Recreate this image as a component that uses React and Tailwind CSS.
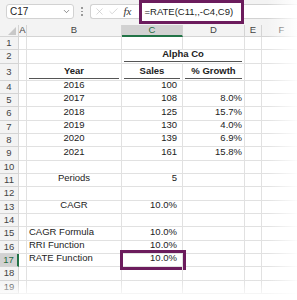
import { ChevronDown, X, Check } from 'lucide-react'

const cols = [
  { key: 'A', w: 'w-[8px]' },
  { key: 'B', w: 'w-[95px]' },
  { key: 'C', w: 'w-[61px]' },
  { key: 'D', w: 'w-[62px]' },
  { key: 'E', w: 'w-[17px]' },
  { key: 'F', w: 'w-[40px]' },
]

const rows = [
  { n: 1, h: 'h-[13px]' },
  { n: 2, h: 'h-[14px]', c: 'Alpha Co' },
  { n: 3, h: 'h-[17px]', b: 'Year', c: 'Sales', d: '% Growth', head: true },
  { n: 4, h: 'h-[13px]', b: '2016', c: '100' },
  { n: 5, h: 'h-[13px]', b: '2017', c: '108', d: '8.0%' },
  { n: 6, h: 'h-[14px]', b: '2018', c: '125', d: '15.7%' },
  { n: 7, h: 'h-[13px]', b: '2019', c: '130', d: '4.0%' },
  { n: 8, h: 'h-[13px]', b: '2020', c: '139', d: '6.9%' },
  { n: 9, h: 'h-[14px]', b: '2021', c: '161', d: '15.8%' },
  { n: 10, h: 'h-[13px]' },
  { n: 11, h: 'h-[13px]', b: 'Periods', c: '5' },
  { n: 12, h: 'h-[14px]' },
  { n: 13, h: 'h-[13px]', b: 'CAGR', c: '10.0%' },
  { n: 14, h: 'h-[13px]' },
  { n: 15, h: 'h-[14px]', b: 'CAGR Formula', c: '10.0%', left: true },
  { n: 16, h: 'h-[13px]', b: 'RRI Function', c: '10.0%', left: true },
  { n: 17, h: 'h-[13px]', b: 'RATE Function', c: '10.0%', left: true, sel: true },
  { n: 18, h: 'h-[14px]' },
  { n: 19, h: 'h-[13px]' },
]

function Row({ r }) {
  const line = 'border-r border-b border-[#e1e1e1]'
  return (
    <div className={`flex ${r.h}`}>
      <div
        className={`w-[19px] shrink-0 flex items-center justify-center border-r border-b border-[#d4d4d4] text-[9.5px] ${
          r.sel ? 'bg-[#d2d2d2] text-[#1e6b3e] border-r-2 border-r-[#217346]' : 'bg-[#f3f3f3] text-[#444]'
        }`}
      >
        {r.n}
      </div>
      <div className={`w-[8px] shrink-0 ${line}`} />
      <div
        className={`w-[95px] shrink-0 ${line} flex items-end pb-[1px] whitespace-nowrap ${
          r.left ? 'justify-start pl-[2px]' : 'justify-center'
        } ${r.head ? 'font-bold' : ''}`}
      >
        {r.head ? (
          <div className="mx-[2px] w-full border-b-[1.5px] border-[#555] text-center">{r.b}</div>
        ) : (
          r.b
        )}
      </div>
      {r.n === 2 ? (
        <div className="w-[123px] shrink-0 border-b border-[#e1e1e1] border-r flex items-end pb-[1px] font-bold">
          <div className="mx-[2px] w-full border-b-[1.5px] border-[#555] text-center">{r.c}</div>
        </div>
      ) : (
        <>
          <div
            className={`relative w-[61px] shrink-0 ${line} flex items-end pb-[1px] ${
              r.head ? 'font-bold' : 'justify-end pr-[5px]'
            }`}
          >
            {r.head ? (
              <div className="mx-[2px] w-full border-b-[1.5px] border-[#555] text-center">{r.c}</div>
            ) : (
              r.c
            )}
            {r.sel && (
              <div className="absolute -left-[2px] -top-[4px] w-[66px] h-[20px] border-[3px] border-[#6c1c5d] bg-transparent" />
            )}
          </div>
          <div
            className={`w-[62px] shrink-0 ${line} flex items-end pb-[1px] ${
              r.head ? 'font-bold' : 'justify-end pr-[2px]'
            }`}
          >
            {r.head ? (
              <div className="mx-[2px] w-full border-b-[1.5px] border-[#555] text-center">{r.d}</div>
            ) : (
              r.d
            )}
          </div>
        </>
      )}
      <div className={`w-[17px] shrink-0 ${line}`} />
      <div className={`w-[40px] shrink-0 ${line}`} />
    </div>
  )
}

export default function App() {
  return (
    <div
      className="relative w-[297px] h-[300px] overflow-hidden bg-white text-[#222] text-[9.5px]"
      style={{ fontFamily: '"Liberation Sans", Arial, sans-serif' }}
    >
      {/* formula bar */}
      <div className="flex h-[25px] items-start bg-[#f3f3f3]">
        <div className="mt-[4px] ml-[6px] flex h-[15px] w-[68px] shrink-0 items-center justify-between rounded-[3px] border border-[#d2d2d2] bg-white pl-[3px] pr-[2px] text-[10px] text-[#222]">
          <span>C17</span>
          <ChevronDown size={9} strokeWidth={1.6} className="text-[#444]" />
        </div>
        <div className="mt-[7px] ml-[7px] flex shrink-0 flex-col gap-[2px]">
          <span className="block h-[1.5px] w-[1.5px] bg-[#999]" />
          <span className="block h-[1.5px] w-[1.5px] bg-[#999]" />
          <span className="block h-[1.5px] w-[1.5px] bg-[#999]" />
        </div>
        <div className="mt-[4px] ml-[7px] flex h-[15px] w-[49px] shrink-0 items-center gap-[3px] rounded-l-[3px] border border-r-0 border-[#d2d2d2] bg-white pl-[3px]">
          <X size={11} strokeWidth={1.2} className="text-[#b8b8b8]" />
          <Check size={11} strokeWidth={1.2} className="text-[#b8b8b8]" />
          <span className="ml-[2px] text-[11px] italic text-[#333]" style={{ fontFamily: '"Liberation Serif", serif' }}>
            fx
          </span>
        </div>
        <div className="flex h-[24px] w-[105px] shrink-0 items-center whitespace-nowrap border-[3px] border-[#6c1c5d] bg-white pl-[3px] text-[9.5px] text-[#222]">
          =RATE(C11,,-C4,C9)
        </div>
        <div className="mt-[4px] h-[15px] flex-1 border-y border-[#d2d2d2] bg-white" />
      </div>

      {/* column headers */}
      <div className="flex h-[12px] bg-[#f3f3f3] text-[9.5px] text-[#444]">
        <div className="relative w-[19px] shrink-0 border-r border-b border-[#d4d4d4]">
          <div
            className="absolute right-[2px] bottom-[1px] h-[8px] w-[8px] bg-[#c8c8c8]"
            style={{ clipPath: 'polygon(100% 0, 100% 100%, 0 100%)' }}
          />
        </div>
        {cols.map((c) => (
          <div
            key={c.key}
            className={`${c.w} shrink-0 flex items-center justify-center border-r border-[#d4d4d4] ${
              c.key === 'C' ? 'bg-[#d2d2d2] text-[#1e6b3e] border-b-2 border-b-[#217346]' : 'border-b'
            }`}
          >
            {c.key}
          </div>
        ))}
      </div>

      {rows.map((r) => (
        <Row key={r.n} r={r} />
      ))}

      {/* edge fades */}
      <div className="pointer-events-none absolute right-0 top-0 h-full w-[30px] bg-gradient-to-r from-transparent to-white/90" />
      <div className="pointer-events-none absolute bottom-0 left-0 h-[20px] w-full bg-gradient-to-b from-transparent to-white" />
    </div>
  )
}
